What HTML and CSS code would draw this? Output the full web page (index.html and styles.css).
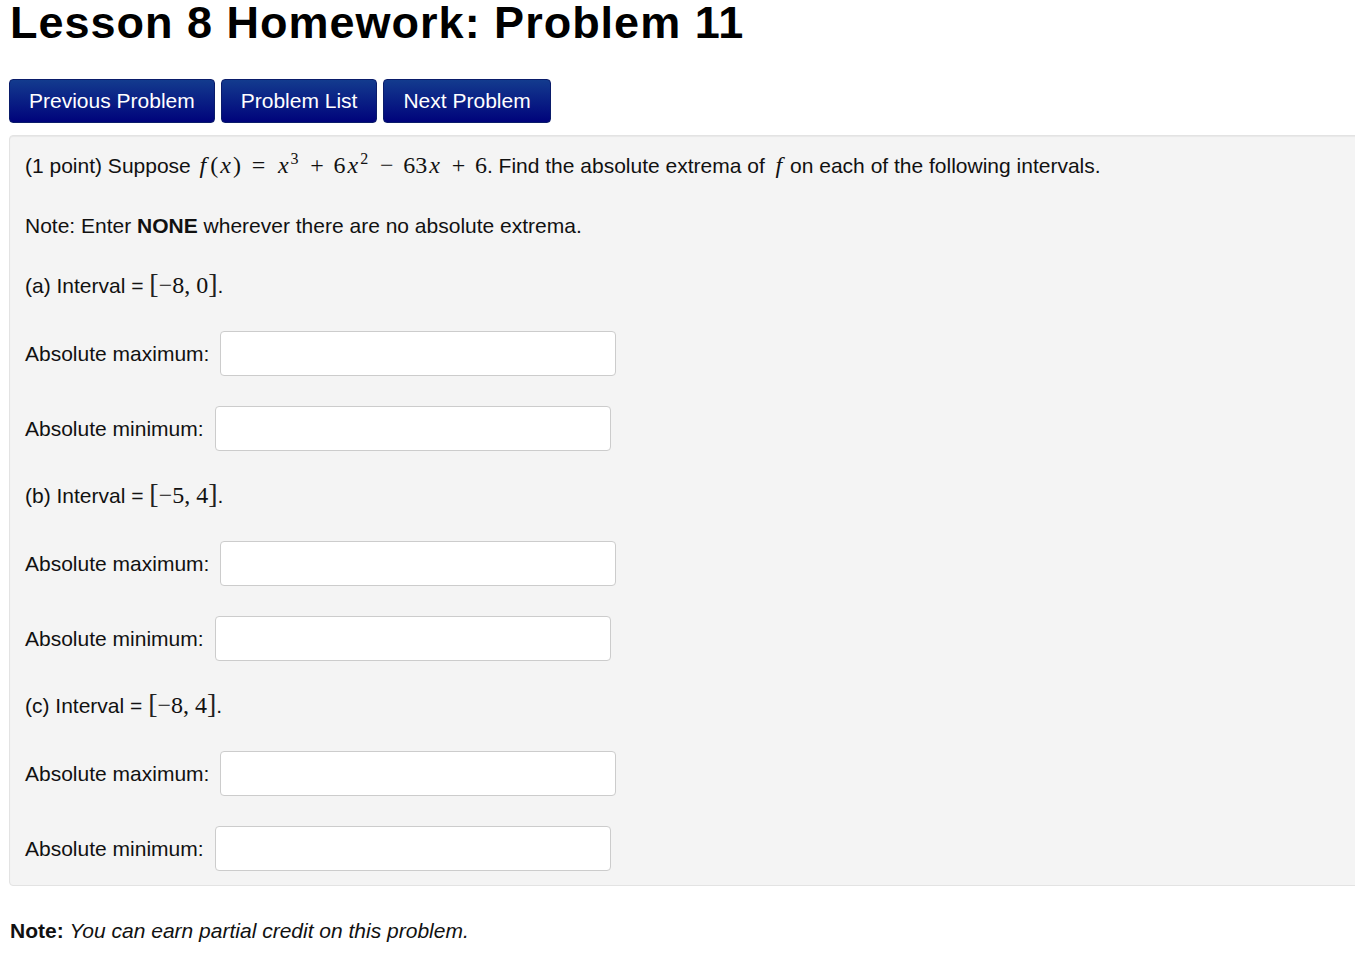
FILE: index.html
```html
<!DOCTYPE html>
<html lang="en">
<head>
<meta charset="utf-8">
<title>Lesson 8 Homework: Problem 11</title>
<link rel="stylesheet" href="styles.css">
</head>
<body>
<h1 class="title">Lesson 8 Homework: Problem 11</h1>
<div class="nav">
  <a class="btn" href="#">Previous Problem</a>
  <a class="btn" href="#">Problem List</a>
  <a class="btn" href="#">Next Problem</a>
</div>
<div class="well">
  <p class="line">(1 point) Suppose <span class="math"><i class="fv">f</i>(<i class="xv">x</i>)<span class="op rel">=</span><i class="xv">x</i><sup>3</sup><span class="op">+</span>6<i class="xv">x</i><sup>2</sup><span class="op">−</span>63<i class="xv">x</i><span class="op">+</span>6</span>. Find the absolute extrema of <span class="math"><i class="fv fv2">f</i></span> on each of the following intervals.</p>
  <p class="line">Note: Enter <b>NONE</b> wherever there are no absolute extrema.</p>
  <p class="line">(a) Interval = <span class="ival"><span class="br">[</span>−8, 0<span class="br">]</span></span>.</p>
  <div class="row"><span>Absolute maximum:</span><input class="ans" type="text"></div>
  <div class="row"><span>Absolute minimum:</span><input class="ans" type="text"></div>
  <p class="line">(b) Interval = <span class="ival"><span class="br">[</span>−5, 4<span class="br">]</span></span>.</p>
  <div class="row"><span>Absolute maximum:</span><input class="ans" type="text"></div>
  <div class="row"><span>Absolute minimum:</span><input class="ans" type="text"></div>
  <p class="line">(c) Interval = <span class="ival"><span class="br">[</span>−8, 4<span class="br">]</span></span>.</p>
  <div class="row"><span>Absolute maximum:</span><input class="ans" type="text"></div>
  <div class="row last"><span>Absolute minimum:</span><input class="ans" type="text"></div>
</div>
<p class="footnote"><b>Note:</b> <i>You can earn partial credit on this problem.</i></p>
</body>
</html>
```
FILE: styles.css
```css
html { overflow-x: hidden; }
body {
  margin: 0;
  padding: 0 0 0 9px;
  font-family: "Liberation Sans", Arial, sans-serif;
  font-size: 21px;
  color: #000;
  background: #fff;
}
.title {
  margin: -1px 0 0 1px;
  font-size: 45px;
  letter-spacing: 1px;
  line-height: 48px;
  font-weight: bold;
}
.nav {
  display: flex;
  gap: 6px;
  margin-top: 32px;
}
.btn {
  display: block;
  height: 44px;
  box-sizing: border-box;
  padding: 0 19px;
  line-height: 42px;
  color: #fff;
  text-decoration: none;
  font-size: 21px;
  background: linear-gradient(#133b8e, #00037b);
  border: 1px solid #0a1c6a;
  border-radius: 4px;
}
.well {
  margin-top: 12px;
  margin-right: -40px;
  padding: 15px 15px 14px 15px;
  background: #f4f4f4;
  border: 1px solid #e3e3e3;
  border-radius: 4px;
  box-shadow: inset 0 1px 1px rgba(0,0,0,0.05);
}
.line {
  margin: 0 0 30px 0;
  line-height: 30px;
  height: 30px;
  color: #111;
}
.math {
  font-family: "Liberation Serif", "Times New Roman", serif;
  font-size: 24px;
  line-height: 20px;
  white-space: nowrap;
}
.math i { font-style: italic; }
.math .fv { padding: 0 4px 0 3px; }
.math .fv2 { padding: 0 2px 0 5px; }
.math .xv { padding: 0 2px; }
.math .op {
  display: inline-block;
  width: 19px;
  text-align: center;
  margin: 0 7px;
}
.math .op.rel { margin: 0 8px; }
.math sup { font-size: 16px; line-height: 0; vertical-align: 9px; padding-right: 2px; }
.ival {
  font-family: "Liberation Serif", "Times New Roman", serif;
  font-size: 24px;
  line-height: 20px;
}
.br { font-size: 28px; line-height: 0; color: #222; }
.row {
  display: flex;
  align-items: center;
  gap: 11px;
  height: 45px;
  margin-bottom: 30px;
  color: #111;
}
.row.last { margin-bottom: 0; }
.ans {
  width: 396px;
  height: 45px;
  box-sizing: border-box;
  border: 1px solid #cccccc;
  border-radius: 4px;
  background: #fff;
  margin: 0;
  padding: 4px 10px;
  font-size: 20px;
}
.footnote {
  margin: 30px 0 0 1px;
  line-height: 30px;
  color: #111;
}
```
